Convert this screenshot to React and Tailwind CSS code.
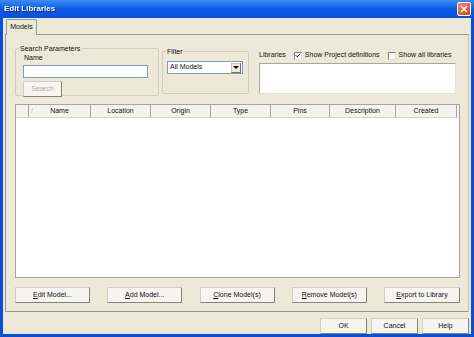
import { Check, X } from "lucide-react";

const font = "font-['Liberation_Sans',Arial,sans-serif]";

function Btn({ children, className = "" }) {
  return (
    <div
      className={`flex items-center justify-center h-[16px] bg-[#f6f5f0] border border-[#d2cfc2] border-r-[#85827a] border-b-[#85827a] rounded-[1px] text-[7px] ${className}`}
    >
      {children}
    </div>
  );
}

function Group({ title, className = "", children }) {
  return (
    <div className={`relative border border-[#d0d0bf] rounded-[2px] ${className}`}>
      <span className="absolute -top-[5px] left-[3px] bg-[#ece9d8] px-[1px] text-[7px] leading-[9px] text-[#111]">
        {title}
      </span>
      {children}
    </div>
  );
}

function Checkbox({ checked }) {
  return (
    <div className="w-[8px] h-[8px] border border-[#8a887c] border-r-[#e2e0d4] border-b-[#e2e0d4] bg-white flex items-center justify-center">
      {checked && <Check className="w-[7px] h-[7px] text-black" strokeWidth={4} />}
    </div>
  );
}

const cols = [
  ["", 13],
  ["Name", 62],
  ["Location", 60],
  ["Origin", 60],
  ["Type", 60],
  ["Pins", 59],
  ["Description", 66],
  ["Created", 61],
];

export default function App() {
  return (
    <div className={`w-[474px] h-[337px] flex flex-col bg-[#0a4fd8] ${font} select-none`}>
      {/* TITLE BAR */}
      <div className="h-[18px] flex items-center justify-between px-[3px] bg-gradient-to-b from-[#3d8bf5] via-[#0a5ae6] to-[#0650d6]">
        <span className="text-white font-bold text-[8px] pl-[1px] drop-shadow-[1px_1px_0_#0a2a8a]">Edit Libraries</span>
        <div className="w-[14px] h-[14px] rounded-[2px] border border-white bg-gradient-to-br from-[#f08b6a] to-[#d83a14] flex items-center justify-center">
          <X className="w-[10px] h-[10px] text-white" strokeWidth={3.5} />
        </div>
      </div>

      {/* BODY */}
      <div className="flex-1 mx-[3px] mb-[3px] bg-[#ece9d8] flex flex-col">
        {/* TAB */}
        <div className="h-[16px] pl-[3px] pt-[1px] flex">
          <div className="relative z-10 w-[31px] h-[16px] bg-[#ece9d8] border border-[#919b9c] border-b-0 rounded-t-[2px] flex items-center justify-center text-[7px] text-[#111]">
            Models
          </div>
        </div>

        {/* PANEL */}
        <div className="ml-[2px] w-[464px] h-[278px] border border-[#919b9c] border-r-[#c5c2b2] border-b-[#9a978a] flex flex-col pl-[9px]">
          {/* TOP ROW */}
          <div className="flex items-start mt-[13px]">
            <Group title="Search Parameters" className="w-[144px] h-[48px]">
              <div className="pl-[7px] pt-[4px] flex flex-col">
                <span className="text-[7px] leading-[9px] text-[#111] pl-[1px]">Name</span>
                <div className="mt-[3px] w-[125px] h-[13px] bg-white border border-[#7f9db9]" />
                <Btn className="mt-[3px] w-[39px] h-[13px] text-[#b0ada1]">Search</Btn>
              </div>
            </Group>

            <Group title="Filter" className="ml-[3px] mt-[3px] w-[87px] h-[43px]">
              <div className="pl-[4px] pt-[9px]">
                <div className="w-[76px] h-[13px] bg-white border border-[#7f9db9] flex items-center justify-between">
                  <span className="text-[7px] text-[#111] pl-[2px]">All Models</span>
                  <div className="w-[10px] h-[10px] mr-[1px] bg-[#ece9d8] border border-[#c8c5b8] border-r-[#716f64] border-b-[#716f64] flex items-center justify-center">
                    <div className="w-0 h-0 border-l-[3px] border-r-[3px] border-t-[3px] border-l-transparent border-r-transparent border-t-black" />
                  </div>
                </div>
              </div>
            </Group>

            <div className="ml-[10px] mt-[3px] flex flex-col">
              <div className="h-[9px] flex items-center text-[7px] text-[#111]">
                <span>Libraries</span>
                <div className="ml-[8px]"><Checkbox checked /></div>
                <span className="ml-[3px]">Show Project definitions</span>
                <div className="ml-[8px]"><Checkbox /></div>
                <span className="ml-[3px]">Show all libraries</span>
              </div>
              <div className="mt-[3px] w-[197px] h-[31px] bg-white border border-[#a7a699] border-r-[#e4e2d6] border-b-[#e4e2d6]" />
            </div>
          </div>

          {/* LIST */}
          <div className="mt-[8px] w-[445px] h-[174px] bg-white border border-[#a7a699]">
            <div className="flex h-[13px] bg-[#f4f3ee] border-b border-[#d6d3c6]">
              {cols.map(([name, w], i) => (
                <div
                  key={i}
                  style={{ width: w }}
                  className="relative shrink-0 h-full flex items-center justify-center text-[7px] text-[#111] border-r border-[#aca899]"
                >
                  {i === 1 && <span className="absolute left-[2px] text-[#b5b2a5]">/</span>}
                  {name}
                </div>
              ))}
            </div>
          </div>

          {/* ACTION BUTTONS */}
          <div className="mt-[9px] w-[445px] flex justify-between text-[#111]">
            <Btn className="w-[75px]"><span><u>E</u>dit Model...</span></Btn>
            <Btn className="w-[75px]"><span><u>A</u>dd Model...</span></Btn>
            <Btn className="w-[75px]"><span><u>C</u>lone Model(s)</span></Btn>
            <Btn className="w-[75px]"><span><u>R</u>emove Model(s)</span></Btn>
            <Btn className="w-[76px]"><span><u>E</u>xport to Library</span></Btn>
          </div>
        </div>

        {/* DIALOG BUTTONS */}
        <div className="mt-[6px] flex justify-end gap-[4px] pr-[2px] text-[#111]">
          <Btn className="w-[47px]">OK</Btn>
          <Btn className="w-[47px]">Cancel</Btn>
          <Btn className="w-[47px]">Help</Btn>
        </div>
      </div>
    </div>
  );
}
